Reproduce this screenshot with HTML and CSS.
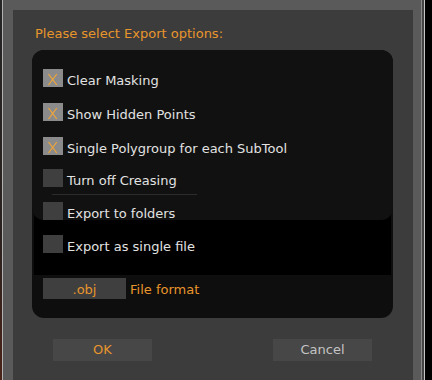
FILE: index.html
```html
<!DOCTYPE html>
<html>
<head>
<meta charset="utf-8">
<link rel="stylesheet" href="styles.css">
</head>
<body>
<div class="edge"></div>
<div class="frame">
  <div class="panel">
    <div class="title">Please select Export options:</div>
    <div class="box">
      <div class="upper">
        <div class="row">
          <span class="cb checked"><svg width="20" height="18" viewBox="0 0 20 18"><path d="M5.5 5L13.8 16M13.8 5L5.5 16" stroke="#f2a637" stroke-width="1.2" fill="none"/></svg></span>
          <span class="label">Clear Masking</span>
        </div>
        <div class="row r2">
          <span class="cb checked"><svg width="20" height="18" viewBox="0 0 20 18"><path d="M5.5 5L13.8 16M13.8 5L5.5 16" stroke="#f2a637" stroke-width="1.2" fill="none"/></svg></span>
          <span class="label">Show Hidden Points</span>
        </div>
        <div class="row r3">
          <span class="cb checked"><svg width="20" height="18" viewBox="0 0 20 18"><path d="M5.5 5L13.8 16M13.8 5L5.5 16" stroke="#f2a637" stroke-width="1.2" fill="none"/></svg></span>
          <span class="label">Single Polygroup for each SubTool</span>
        </div>
        <div class="row r4">
          <span class="cb"></span>
          <span class="label">Turn off Creasing</span>
        </div>
        <div class="sep"></div>
        <div class="row r5">
          <span class="cb"></span>
          <span class="label">Export to folders</span>
        </div>
      </div>
      <div class="well">
        <div class="row">
          <span class="cb"></span>
          <span class="label">Export as single file</span>
        </div>
      </div>
      <div class="format">
        <span class="fmt-btn">.obj</span>
        <span class="fmt-label">File format</span>
      </div>
    </div>
    <div class="buttons">
      <span class="btn ok">OK</span>
      <span class="btn cancel">Cancel</span>
    </div>
  </div>
</div>
<div class="rim"></div>
</body>
</html>
```
FILE: styles.css
```css
html, body {
  margin: 0;
  padding: 0;
}
body {
  width: 432px;
  height: 380px;
  overflow: hidden;
  background: #000;
  display: flex;
  font-family: "DejaVu Sans", sans-serif;
  font-size: 13px;
}
.edge {
  width: 2px;
  background: linear-gradient(#262626, #2a2220 60%, #4a2418);
}
.frame {
  width: 418px;
  border-left: 1px solid #b2b2b2;
  border-right: 1px solid #8a8a8a;
  background: #5a5a5a;
  padding: 10px 8px 0 10px;
  box-sizing: content-box;
  width: 400px;
}
.rim {
  width: 2px;
  background: #444;
  border-right: 1px solid #c6c6c6;
}
.panel {
  background: #3c3c3c;
  height: 370px;
  padding-top: 16px;
  box-sizing: border-box;
}
.title {
  margin-left: 22px;
  color: #e8952c;
  line-height: 16px;
  height: 16px;
}
.box {
  margin: 8px 0 0 19px;
  width: 361px;
  background: #0e0e0e;
  border-radius: 12px;
  display: flex;
  flex-direction: column;
}
.upper {
  position: relative;
  z-index: 1;
  background: #111;
  border-radius: 12px;
  padding: 19px 0 0 11px;
}
.row {
  display: flex;
  height: 18px;
}
.r2, .r3 { margin-top: 16px; }
.r4 { margin-top: 14px; }
.r5 { margin-top: 7px; }
.sep {
  margin: 7px 0 0 9px;
  width: 145px;
  height: 1px;
  background: #2c2c2c;
}
.cb {
  width: 20px;
  height: 18px;
  background: #3f3f3f;
  flex: none;
}
.cb svg { display: block; }
.cb.checked { background: #8b8b8b; }
.label {
  margin-left: 4px;
  color: #e2e2e2;
  line-height: 18px;
  padding-top: 3px;
  white-space: nowrap;
}
.well {
  margin: -12px 2px 0 2px;
  background: #000;
  padding: 27px 0 22px 9px;
}
.format {
  display: flex;
  margin-top: 3px;
  padding: 0 0 19px 11px;
  height: 21px;
}
.fmt-btn {
  width: 83px;
  height: 21px;
  background: #3f3f3f;
  color: #e8952c;
  text-align: center;
  line-height: 21px;
  padding-top: 1px;
  box-sizing: border-box;
}
.fmt-label {
  margin-left: 4px;
  color: #e8952c;
  line-height: 21px;
  padding-top: 1px;
}
.buttons {
  display: flex;
  margin-top: 21px;
  padding-left: 40px;
  gap: 121px;
}
.btn {
  width: 99px;
  height: 22px;
  background: #474747;
  text-align: center;
  line-height: 22px;
}
.ok { color: #e8952c; }
.cancel { color: #c4c4c4; }
```
